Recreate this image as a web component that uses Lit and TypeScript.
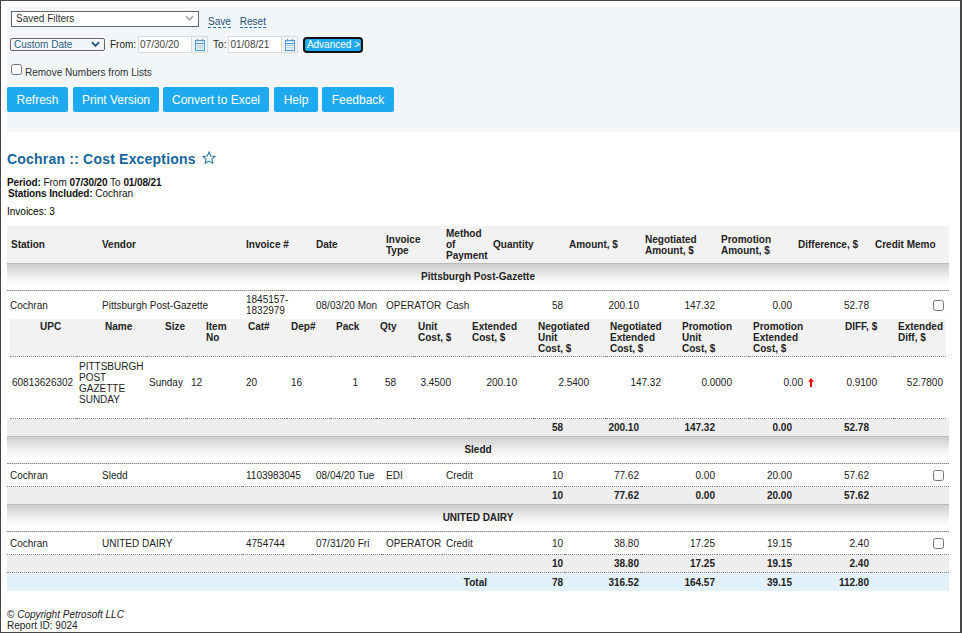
import { LitElement, html, css, svg } from "lit";
import { customElement } from "lit/decorators.js";

const chevron = (cls: string) => html`<svg class=${cls} viewBox="0 0 10 6" width="9" height="6"><path d="M1 1l4 4 4-4" fill="none" stroke="currentColor" stroke-width="2"/></svg>`;
const calendar = html`<svg viewBox="0 0 10 12" width="10" height="12"><g fill="none" stroke="#4a9ae0" stroke-width="1"><rect x=".5" y="1.5" width="9" height="10"/><path d="M.5 4.5h9M2.5 0v2.5M7.5 0v2.5"/></g><g fill="#7db8ea"><rect x="2" y="6" width="1.5" height="1"/><rect x="4.3" y="6" width="1.5" height="1"/><rect x="6.6" y="6" width="1.5" height="1"/><rect x="2" y="8.3" width="1.5" height="1"/><rect x="4.3" y="8.3" width="1.5" height="1"/><rect x="6.6" y="8.3" width="1.5" height="1"/></g></svg>`;
const star = svg`<path d="M6.5 1l1.6 3.6 3.9.4-2.9 2.6.8 3.8-3.4-2-3.4 2 .8-3.8L1 5l3.9-.4z" fill="none" stroke="#2c79a8" stroke-width="1"/>`;
const arrow = svg`<path d="M3.5 0L7 4.5H4.8V11H2.2V4.5H0z" fill="#f00"/>`;

const mainCols = [91, 144, 70, 70, 60, 47, 76, 76, 76, 77, 77, 78];
const innerCols = [66, 70, 40, 58, 43, 43, 46, 38, 54, 66, 72, 72, 71, 92, 53, 52];

@customElement("app-root")
export class AppRoot extends LitElement {
  static styles = css`
    :host { display: block; height: 633px; box-sizing: border-box; border: solid #444; border-width: 1px 2px 1px 1px; font: 10px/11px "Liberation Sans", Arial, sans-serif; color: #222; background: #fff; overflow: hidden; }
    .page { padding: 6px 0 0 6px; }
    .panel { background: #f3f6f9; height: 125px; padding: 4px 0 0 0; box-sizing: border-box; }
    .r1 { display: flex; align-items: flex-start; padding-left: 4px; height: 25px; }
    .sel { position: relative; display: block; }
    select { appearance: none; -webkit-appearance: none; font: 10px "Liberation Sans", Arial, sans-serif; background: #fff; border: 1px solid #666; border-radius: 0; padding: 0 0 0 4px; margin: 0; display: block; box-sizing: border-box; }
    .saved { width: 188px; height: 16px; color: #333; padding-bottom: 2px; }
    .custom { width: 95px; height: 13px; color: #2b5f82; border-radius: 2px; padding-left: 3px; background: transparent; }
    .sel svg { position: absolute; pointer-events: none; }
    .ch1 { right: 5px; top: 4px; color: #aaa; }
    .ch2 { right: 5px; top: 3px; color: #1b4f7a; }
    .links { display: flex; gap: 9px; margin: 5px 0 0 9px; }
    .links a { color: #1d4e79; border-bottom: 1px dashed #1d6fb0; line-height: 11px; }
    .r2 { display: flex; align-items: center; padding-left: 3px; height: 17px; }
    .r2 .lbl { margin-left: 5px; margin-right: 2px; }
    .dp { display: flex; height: 17px; border: 1px solid #d8dcdf; box-sizing: border-box; background: #fff; }
    .dp input { width: 52px; border: 0; padding: 0 0 0 1px; margin: 0; font: 10px "Liberation Sans", Arial, sans-serif; color: #444; background: #fff; box-sizing: border-box; outline: none; }
    .dp .ic { width: 16px; background: #f0f2f4; border-left: 1px solid #d8dcdf; display: flex; align-items: center; justify-content: center; box-sizing: border-box; }
    .adv { margin-left: 5px; width: 60px; height: 16px; padding: 0; background: #1eaaf1; color: #fff; border: 2px solid #111; border-radius: 4px; font: 10px "Liberation Sans", Arial, sans-serif; box-sizing: border-box; white-space: nowrap; }
    .r3 { display: flex; padding-left: 4px; margin-top: 11px; height: 23px; }
    .r3 input { margin: 0 3px 0 0; width: 11px; height: 11px; }
    .r3 span { margin-top: 3px; color: #333; }
    .btns { display: flex; }
    .btns button { height: 25px; padding: 0; background: #1eaaf1; color: #fff; border: 0; border-radius: 2px; font: 12px "Liberation Sans", Arial, sans-serif; box-sizing: border-box; }
    .b1 { width: 61px; } .b2 { width: 86px; margin-left: 5px; } .b3 { width: 106px; margin-left: 4px; } .b4 { width: 44px; margin-left: 5px; } .b5 { width: 72px; margin-left: 4px; }
    h1 { font: bold 14px/18px "Liberation Sans", Arial, sans-serif; letter-spacing: .2px; color: #17659a; margin: 18px 0 0 0; display: flex; align-items: center; gap: 6px; height: 18px; }
    h1 svg { margin-top: -2px; }
    .meta { margin-top: 9px; color: #111; }
    .meta div { height: 11px; }
    .meta b { letter-spacing: -.12px; }
    .st { padding-left: 1px; }
    .inv { margin-top: 7px; margin-bottom: 9px; color: #000; }
    b { font-weight: bold; }
    table { border-collapse: separate; border-spacing: 0; table-layout: fixed; }
    .main { width: 942px; }
    td, th { padding: 0; font: inherit; overflow: hidden; }
    .main > thead th { background: #f2f2f2; height: 38px; text-align: left; padding-left: 4px; font-weight: bold; border-bottom: 1px solid #bbb; box-sizing: border-box; vertical-align: middle; }
    .group td { height: 27px; box-sizing: border-box; text-align: center; font-weight: bold; background: linear-gradient(#ccc, #f4f4f4 55%, #fff 85%); border-bottom: 1px dotted #888; padding-bottom: 1px; }
    .row td { box-sizing: border-box; border-bottom: 1px dotted #888; vertical-align: middle; padding-left: 4px; }
    .row td:first-child { padding-left: 3px; }
    .row.h29 td { height: 28px; border-bottom: 0; }
    .row.h23 td { height: 23px; }
    .row td.n { text-align: right; padding: 0 2px 0 0; }
    .row td.ck { padding: 1px 0 0 0; text-align: right; }
    .ck input { width: 11px; height: 11px; margin: 0 5px 0 0; display: inline-block; vertical-align: middle; }
    .sub td { height: 18px; box-sizing: border-box; background: #eee; font-weight: bold; text-align: right; padding: 0 2px 0 0; border-bottom: 1px solid #bbb; }
    .sub.mid td { border-bottom: 1px dotted #888; }
    .total td { height: 18px; box-sizing: border-box; background: #e3f1fa; font-weight: bold; text-align: right; padding: 0 2px 0 0; }
    .wrap { padding: 0 3px; }
    .inner { width: 936px; }
    .inner th { background: #f2f2f2; height: 38px; box-sizing: border-box; vertical-align: top; text-align: left; font-weight: bold; border-bottom: 1px dotted #888; padding: 2px 0 0 4px; }
    .inner td { height: 62px; box-sizing: border-box; vertical-align: middle; border-bottom: 1px dotted #888; text-align: right; padding-right: 17px; padding-bottom: 10px; }
    .inner td.l { text-align: left; padding-right: 0; padding-left: 2px; }
    .inner th.p1 { padding-left: 30px; } .inner th.p2 { padding-left: 29px; } .inner th.p3 { padding-left: 19px; } .inner th.p4 { padding-left: 20px; } .inner th.p7 { padding-left: 6px; }
    .inner td.d2 { padding-left: 3px; padding-right: 5px; } .inner td.d3 { padding-left: 3px; } .inner td.d4 { padding-left: 5px; } .inner td.d6 { padding-left: 4px; }
    .inner td.e1 { padding-right: 18px; } .inner td.e14 { padding-right: 27px; } .inner td.e16 { padding-right: 3px; }
    .up { margin-left: 5px; vertical-align: -1px; }
    .foot { margin-top: 18px; }
    .foot i { font-style: italic; }
  `;

  private sub(q: string, a: string, n: string, p: string, d: string, cls = "") {
    return html`<tr class="sub ${cls}"><td colspan="6"></td><td>${q}</td><td>${a}</td><td>${n}</td><td>${p}</td><td>${d}</td><td></td></tr>`;
  }
  private row(v: string, i: unknown, dt: string, t: string, m: string, q: string, a: string, n: string, p: string, d: string, cls = "h23") {
    return html`<tr class="row ${cls}"><td>Cochran</td><td>${v}</td><td>${i}</td><td>${dt}</td><td>${t}</td><td>${m}</td><td class="n">${q}</td><td class="n">${a}</td><td class="n">${n}</td><td class="n">${p}</td><td class="n">${d}</td><td class="n ck"><input type="checkbox" /></td></tr>`;
  }

  render() {
    return html`<div class="page">
      <section class="panel">
        <div class="r1">
          <span class="sel"><select class="saved"><option>Saved Filters</option></select>${chevron("ch1")}</span>
          <div class="links"><a>Save</a><a>Reset</a></div>
        </div>
        <div class="r2">
          <span class="sel"><select class="custom"><option>Custom Date</option></select>${chevron("ch2")}</span>
          <span class="lbl">From:</span>
          <div class="dp"><input value="07/30/20" /><span class="ic">${calendar}</span></div>
          <span class="lbl">To:</span>
          <div class="dp"><input value="01/08/21" /><span class="ic">${calendar}</span></div>
          <button class="adv">Advanced &gt;</button>
        </div>
        <label class="r3"><input type="checkbox" /><span>Remove Numbers from Lists</span></label>
        <div class="btns">
          <button class="b1">Refresh</button>
          <button class="b2">Print Version</button>
          <button class="b3">Convert to Excel</button>
          <button class="b4">Help</button>
          <button class="b5">Feedback</button>
        </div>
      </section>
      <h1>Cochran :: Cost Exceptions <svg viewBox="0 0 13 13" width="14" height="14">${star}</svg></h1>
      <div class="meta">
        <div><b>Period:</b> From <b>07/30/20</b> To <b>01/08/21</b></div>
        <div class="st"><b>Stations Included:</b> Cochran</div>
      </div>
      <div class="inv">Invoices: 3</div>
      <table class="main">
        <colgroup>${mainCols.map((w) => html`<col style="width:${w}px" />`)}</colgroup>
        <thead><tr><th>Station</th><th>Vendor</th><th>Invoice #</th><th>Date</th><th>Invoice<br />Type</th><th>Method<br />of<br />Payment</th><th>Quantity</th><th>Amount, $</th><th>Negotiated<br />Amount, $</th><th>Promotion<br />Amount, $</th><th>Difference, $</th><th>Credit Memo</th></tr></thead>
        <tbody>
          <tr class="group"><td colspan="12">Pittsburgh Post-Gazette</td></tr>
          ${this.row("Pittsburgh Post-Gazette", html`1845157-<br />1832979`, "08/03/20 Mon", "OPERATOR", "Cash", "58", "200.10", "147.32", "0.00", "52.78", "h29")}
          <tr><td colspan="12" class="wrap">
            <table class="inner">
              <colgroup>${innerCols.map((w) => html`<col style="width:${w}px" />`)}</colgroup>
              <thead><tr>
                <th class="p1">UPC</th><th class="p2">Name</th><th class="p3">Size</th><th class="p4">Item<br />No</th><th>Cat#</th><th>Dep#</th><th class="p7">Pack</th><th>Qty</th><th>Unit<br />Cost, $</th><th>Extended<br />Cost, $</th><th>Negotiated<br />Unit<br />Cost, $</th><th>Negotiated<br />Extended<br />Cost, $</th><th>Promotion<br />Unit<br />Cost, $</th><th>Promotion<br />Extended<br />Cost, $</th><th>DIFF, $</th><th>Extended<br />Diff, $</th>
              </tr></thead>
              <tbody><tr>
                <td class="l">60813626302</td><td class="l d2">PITTSBURGH POST GAZETTE SUNDAY</td><td class="l d3">Sunday</td><td class="l d4">12</td><td class="l">20</td><td class="l d6">16</td><td class="e1">1</td><td class="e1">58</td><td>3.4500</td><td>200.10</td><td>2.5400</td><td>147.32</td><td>0.0000</td><td class="e14">0.00<svg class="up" viewBox="0 0 7 11" width="6" height="9">${arrow}</svg></td><td>0.9100</td><td class="e16">52.7800</td>
              </tr></tbody>
            </table>
          </td></tr>
          ${this.sub("58", "200.10", "147.32", "0.00", "52.78")}
          <tr class="group"><td colspan="12">Sledd</td></tr>
          ${this.row("Sledd", "1103983045", "08/04/20 Tue", "EDI", "Credit", "10", "77.62", "0.00", "20.00", "57.62")}
          ${this.sub("10", "77.62", "0.00", "20.00", "57.62")}
          <tr class="group"><td colspan="12">UNITED DAIRY</td></tr>
          ${this.row("UNITED DAIRY", "4754744", "07/31/20 Fri", "OPERATOR", "Credit", "10", "38.80", "17.25", "19.15", "2.40")}
          ${this.sub("10", "38.80", "17.25", "19.15", "2.40", "mid")}
          <tr class="total"><td colspan="5"></td><td>Total</td><td>78</td><td>316.52</td><td>164.57</td><td>39.15</td><td>112.80</td><td></td></tr>
        </tbody>
      </table>
      <div class="foot"><div>© <i>Copyright Petrosoft LLC</i></div><div>Report ID: 9024</div></div>
    </div>`;
  }
}
